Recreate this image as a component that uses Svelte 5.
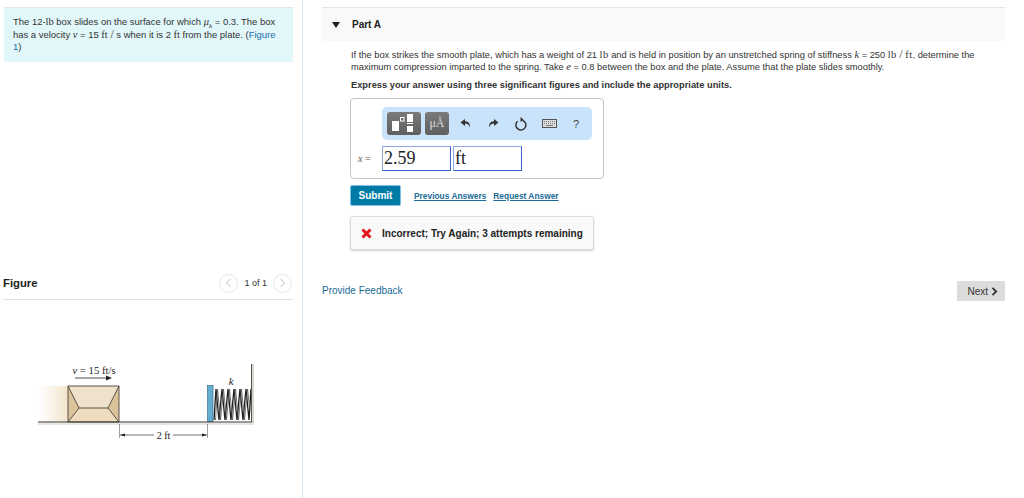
<script>
  let answer = "2.59";
  let units = "ft";
</script>

<div class="page">
  <aside class="left">
    <div class="intro">
      The 12-<span class="unit">lb</span> box slides on the surface for which <i class="var">μ<sub>k</sub></i> = 0.3. The box
      has a velocity <i class="var">v</i> = 15 <span class="unit">ft</span> <span class="slash">/</span> s when it is 2 <span class="unit">ft</span> from the plate. (<span class="link">Figure 1</span>)
    </div>

    <div class="figure-head">
      <h2>Figure</h2>
      <div class="pager">
        <span class="round">
          <svg width="7" height="10" viewBox="0 0 7 10"><path d="M5.5 1 1.5 5l4 4" fill="none" stroke="#bbb" stroke-width="1"/></svg>
        </span>
        <span>1 of 1</span>
        <span class="round">
          <svg width="7" height="10" viewBox="0 0 7 10"><path d="M1.5 1l4 4-4 4" fill="none" stroke="#bbb" stroke-width="1"/></svg>
        </span>
      </div>
    </div>

    <svg class="diagram" width="250" height="100" viewBox="20 350 250 100">
      <defs>
        <linearGradient id="trail" x1="0" x2="1" y1="0" y2="0">
          <stop offset="0" stop-color="#fff"/>
          <stop offset="1" stop-color="#f3e4cc"/>
        </linearGradient>
      </defs>
      <rect x="39" y="386" width="29" height="36" fill="url(#trail)"/>
      <rect x="252" y="364" width="2" height="60" fill="#d8d8cc"/>
      <rect x="38" y="423" width="216" height="2" fill="#e6e6de"/>
      <rect x="68" y="386" width="51" height="36" fill="#dcc39c"/>
      <path d="M68 386h51l-11 22H79z" fill="#efe2cc"/>
      <path d="M79 408h29l11 14H68z" fill="#eddcc0"/>
      <path d="M68 386h51v36H68zM68 386l11 22h29l11-22M68 422l11-14M119 422l-11-14" fill="none" stroke="#4a4238" stroke-width="0.9"/>
      <text x="94" y="374" class="fig" text-anchor="middle"><tspan font-style="italic">v</tspan> = 15 ft/s</text>
      <path d="M75 378h33" stroke="#222" stroke-width="0.8"/>
      <path d="M112 378l-6-2.5v5z" fill="#222"/>
      <text x="231" y="385" class="fig" text-anchor="middle" font-style="italic">k</text>
      <path d="M214 420l2-31 3 31 3-31 3 31 3-31 3 31 3-31 3 31 3-31 3 31 3-31 3 31 2-31" fill="none" stroke="#1c1c1c" stroke-width="1.300"/>
      <path d="M215.500 420l2-31 3 31 3-31 3 31 3-31 3 31 3-31 3 31 3-31 3 31 3-31 2.500 22" fill="none" stroke="#555" stroke-width="0.800"/>
      <rect x="207.500" y="385.500" width="5.500" height="36" fill="#62afd2" stroke="#3c6d88" stroke-width="0.7"/>
      <path d="M251.500 364v58" stroke="#555" stroke-width="1"/>
      <path d="M38 422h214" stroke="#333" stroke-width="1"/>
      <path d="M119.500 424v14M207.500 424v14" stroke="#777" stroke-width="0.7"/>
      <path d="M120 435h34M173 435h34" stroke="#333" stroke-width="0.7"/>
      <path d="M120 435l5-1.500v3zM207 435l-5-1.500v3z" fill="#222"/>
      <text x="163.500" y="439" class="fig small" text-anchor="middle">2 ft</text>
    </svg>
  </aside>

  <main class="right">
    <header class="part-head">
      <svg width="8" height="6" viewBox="0 0 8 6"><path d="M0 0h8L4 6z" fill="#222"/></svg>
      <span>Part A</span>
    </header>

    <div class="part-body">
      <p class="question">
        If the box strikes the smooth plate, which has a weight of 21 <span class="unit">lb</span> and is held in position by an unstretched spring of stiffness <i class="var">k</i> = 250 <span class="unit">lb</span> <span class="slash">/</span> <span class="unit">ft</span>, determine the maximum compression imparted to the spring. Take <i class="var">e</i> = 0.8 between the box and the plate. Assume that the plate slides smoothly.
      </p>
      <p class="express">Express your answer using three significant figures and include the appropriate units.</p>

      <div class="answer-box">
        <div class="toolbar">
          <span class="tool tool-wide">
            <svg width="34" height="23" viewBox="0 0 34 23">
              <rect x="5" y="9" width="7" height="10" fill="#fff"/>
              <rect x="13.500" y="5.500" width="3.500" height="3.500" fill="none" stroke="#fff" stroke-width="1"/>
              <rect x="20" y="2" width="6" height="8" fill="#fff"/>
              <rect x="20" y="11" width="6" height="1" fill="#fff"/>
              <rect x="20" y="14" width="6" height="6" fill="#fff"/>
            </svg>
          </span>
          <span class="tool tool-mu">μÅ</span>
          <svg class="icon undo" width="12" height="11" viewBox="0 0 12 11"><path d="M5 1 .5 4.500 5 8V5.600c2.600 0 4 1 4.600 4 .9-3.500-.6-6.200-4.600-6.400z" fill="#333"/></svg>
          <svg class="icon" width="12" height="11" viewBox="0 0 12 11"><path d="M7 1l4.500 3.500L7 8V5.600c-2.600 0-4 1-4.600 4C1.500 6.100 3 3.400 7 3.200z" fill="#333"/></svg>
          <svg class="icon" width="13" height="14" viewBox="0 0 13 14"><path d="M8.300 3.200A5 5 0 1 1 3.500 4.300" fill="none" stroke="#333" stroke-width="1.500"/><path d="M6.500 0v5l3-2.500z" fill="#333"/></svg>
          <svg class="icon" width="15" height="9" viewBox="0 0 15 9"><rect x=".5" y=".5" width="14" height="8" fill="#ddd" stroke="#555"/><path d="M2 2.500h11M2 4.500h11" stroke="#777" stroke-dasharray="1 1"/><path d="M4 6.500h7" stroke="#777"/></svg>
          <span class="help">?</span>
        </div>
        <div class="entry">
          <span class="label"><i>x</i> =</span>
          <input class="field" value={answer} readonly />
          <input class="field" value={units} readonly />
        </div>
      </div>

      <div class="actions">
        <button type="button" class="submit">Submit</button>
        <span class="action-link">Previous Answers</span>
        <span class="action-link">Request Answer</span>
      </div>

      <div class="feedback">
        <svg width="11" height="11" viewBox="0 0 11 11"><path d="M1.500 1.500l8 8M9.500 1.500l-8 8" stroke="#e8141c" stroke-width="3"/></svg>
        <span>Incorrect; Try Again; 3 attempts remaining</span>
      </div>
    </div>

    <footer class="bottom">
      <span class="provide">Provide Feedback</span>
      <button type="button" class="next">Next
        <svg width="7" height="9" viewBox="0 0 7 9"><path d="M1.500 .8 5.200 4.500 1.500 8.200" fill="none" stroke="#333" stroke-width="1.800"/></svg>
      </button>
    </footer>
  </main>
</div>

<style>
  :global(body) {
    margin: 0;
    background: #fff;
  }

  .page {
    display: flex;
    width: 1024px;
    height: 498px;
    overflow: hidden;
    font-family: "Liberation Sans", Arial, sans-serif;
    color: #333;
  }

  .left {
    box-sizing: border-box;
    width: 303px;
    padding: 7px 9px 0 4px;
    border-right: 1px solid #d6e4f0;
  }

  .intro {
    height: 46px;
    padding: 8px 9px 0;
    border-top: 1px solid #e3e6e8;
    background: #e2f7fa;
    font-size: 9.450px;
    line-height: 12px;
  }

  .unit {
    font-family: "Liberation Serif", serif;
    font-size: 10.500px;
    letter-spacing: 0.4px;
  }

  .intro .unit {
    letter-spacing: 0;
  }

  .slash {
    font-family: "Liberation Serif", serif;
    font-size: 12px;
    line-height: 1;
  }

  .var {
    font-family: "Liberation Serif", serif;
    font-size: 10.500px;
    line-height: 1;
  }

  sub {
    font-size: 7px;
    line-height: 0;
  }

  .link {
    color: #1a6fa8;
  }

  .figure-head {
    display: flex;
    align-items: center;
    justify-content: space-between;
    height: 26px;
    margin: 208px 0 0 -1px;
    padding: 0 1px 3px 0;
    border-bottom: 1px solid #e0e4e6;
  }

  h2 {
    margin: 0;
    font-size: 11.300px;
    font-weight: bold;
    color: #222;
  }

  .pager {
    display: flex;
    align-items: center;
    gap: 6px;
    font-size: 9px;
    color: #333;
  }

  .round {
    display: flex;
    align-items: center;
    justify-content: center;
    width: 17px;
    height: 17px;
    border: 1px solid #e6e6e6;
    border-radius: 50%;
  }

  .diagram {
    display: block;
    margin: 50px 0 0 16px;
  }

  .fig {
    font-family: "Liberation Serif", serif;
    font-size: 10.700px;
    fill: #222;
  }

  .fig.small {
    font-size: 10px;
  }

  .right {
    flex: 1;
    padding: 7px 19px 0 19px;
  }

  .part-head {
    display: flex;
    align-items: center;
    gap: 12px;
    height: 33px;
    padding-left: 10px;
    border-top: 1px solid #e3e6e8;
    background: #f9f9f9;
    font-size: 10px;
    font-weight: bold;
    color: #222;
  }

  .part-body {
    padding: 7px 0 0 28px;
  }

  p {
    margin: 0 0 0 1px;
    font-size: 9.300px;
    line-height: 12px;
    color: #333;
  }

  .question {
    width: 640px;
  }

  .express {
    margin-top: 6px;
    font-weight: bold;
  }

  .answer-box {
    box-sizing: border-box;
    width: 254px;
    height: 81px;
    margin-top: 7px;
    padding: 8px 0 0 31px;
    border: 1px solid #c4c4c4;
    border-radius: 4px;
  }

  .toolbar {
    display: flex;
    align-items: center;
    box-sizing: border-box;
    width: 210px;
    height: 33px;
    padding-left: 5px;
    border-radius: 5px;
    background: #c9e3fb;
  }

  .tool {
    display: flex;
    align-items: center;
    justify-content: center;
    height: 23px;
    border-radius: 3px;
    background: linear-gradient(#7a7a7a, #5f5f5f);
    color: #ddd;
  }

  .tool-wide {
    width: 34px;
  }

  .tool-mu {
    width: 24px;
    margin-left: 4px;
    font-family: "Liberation Serif", serif;
    font-size: 12px;
  }

  .icon {
    margin-left: 15px;
  }

  .icon.undo {
    margin-left: 11px;
  }

  .help {
    margin-left: 16px;
    font-size: 11px;
    color: #444;
  }

  .entry {
    display: flex;
    align-items: center;
    gap: 2px;
    margin: 6px 0 0 -24px;
  }

  .label {
    width: 22px;
    font-size: 10px;
    font-family: "Liberation Serif", serif;
    color: #555;
  }

  .field {
    box-sizing: border-box;
    width: 69px;
    height: 25px;
    padding: 0 1px;
    border: 1px solid #3b63d0;
    border-top-color: #8ea4e4;
    border-left-color: #8ea4e4;
    outline: none;
    font-family: "Liberation Serif", serif;
    font-size: 18px;
    color: #222;
  }

  .actions {
    display: flex;
    align-items: center;
    gap: 7px;
    margin-top: 6px;
  }

  .submit {
    width: 51px;
    height: 21px;
    margin-right: 6px;
    padding: 0;
    border: 1px solid #7fc0e8;
    border-radius: 2px;
    background: #007ba6;
    color: #fff;
    font-family: inherit;
    font-size: 10px;
    font-weight: bold;
  }

  .action-link {
    font-size: 8.400px;
    font-weight: bold;
    color: #1a6c96;
    text-decoration: underline;
  }

  .feedback {
    display: flex;
    align-items: center;
    gap: 10px;
    box-sizing: border-box;
    width: 244px;
    height: 34px;
    margin-top: 10px;
    padding-left: 10px;
    border: 1px solid #dcdcdc;
    border-radius: 3px;
    background: #f9f9f9;
    box-shadow: 0 1px 2px rgba(0, 0, 0, 0.2);
    font-size: 10px;
    font-weight: bold;
    color: #222;
  }

  .bottom {
    display: flex;
    align-items: center;
    justify-content: space-between;
    margin-top: 29px;
  }

  .provide {
    font-size: 10px;
    color: #1a6c96;
  }

  .next {
    display: flex;
    align-items: center;
    gap: 3px;
    height: 20px;
    margin-top: 2px;
    padding: 0 7px 0 10px;
    border: none;
    background: #dcdcdc;
    color: #333;
    font-family: inherit;
    font-size: 10px;
  }
</style>
